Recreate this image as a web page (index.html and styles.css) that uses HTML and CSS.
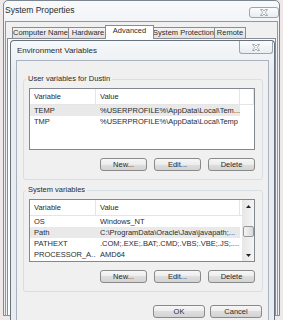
FILE: index.html
```html
<!DOCTYPE html>
<html lang="en">

<head>
  <meta charset="UTF-8">
  <meta name="viewport" content="width=device-width, initial-scale=1.0">
  <title>Environment Variables</title>
  <link rel="stylesheet" href="styles.css">
</head>

<body>
  <div class="desk">

    <!-- back window -->
    <div class="win sys">
      <div class="sys-title">
        <span class="title-text">System Properties</span>
        <span class="close sys-close">
          <svg width="8" height="7" viewBox="0 0 8 7"><polygon points="0.5,0.5 2.6,0.5 4,2 5.4,0.5 7.5,0.5 5.2,3.5 7.5,6.5 5.4,6.5 4,5 2.6,6.5 0.5,6.5 2.8,3.5" fill="#fff" stroke="#8c97a3" stroke-width="0.8"/></svg>
        </span>
      </div>
      <div class="sys-client">
        <ul class="tabs">
          <li class="t-name">Computer Name</li>
          <li class="t-hw">Hardware</li>
          <li class="t-adv on">Advanced</li>
          <li class="t-prot">System Protection</li>
          <li class="t-rem">Remote</li>
        </ul>
        <div class="tab-panel"></div>
      </div>
    </div>

    <!-- front dialog -->
    <div class="win env">
      <div class="env-title">
        <span>Environment Variables</span>
        <span class="close env-close">
          <svg width="8" height="7" viewBox="0 0 8 7"><polygon points="0.5,0.5 2.6,0.5 4,2 5.4,0.5 7.5,0.5 5.2,3.5 7.5,6.5 5.4,6.5 4,5 2.6,6.5 0.5,6.5 2.8,3.5" fill="#fff" stroke="#8c97a3" stroke-width="0.8"/></svg>
        </span>
      </div>

      <div class="env-client">
        <fieldset class="group">
          <legend>User variables for Dustin</legend>
          <div class="lv">
            <div class="lv-table">
              <div class="lv-head">
                <div class="c1">Variable</div>
                <div class="c2">Value</div>
                <div class="c3"></div>
              </div>
              <div class="lv-row sel">
                <div class="c1">TEMP</div>
                <div class="c2">%USERPROFILE%\AppData\Local\Tem...</div>
              </div>
              <div class="lv-row">
                <div class="c1">TMP</div>
                <div class="c2">%USERPROFILE%\AppData\Local\Temp</div>
              </div>
            </div>
          </div>
          <div class="btns">
            <button class="btn">New...</button>
            <button class="btn">Edit...</button>
            <button class="btn">Delete</button>
          </div>
        </fieldset>

        <fieldset class="group group-sys">
          <legend>System variables</legend>
          <div class="lv">
            <div class="lv-table">
              <div class="lv-head">
                <div class="c1">Variable</div>
                <div class="c2">Value</div>
              </div>
              <div class="lv-row">
                <div class="c1">OS</div>
                <div class="c2">Windows_NT</div>
              </div>
              <div class="lv-row sel">
                <div class="c1">Path</div>
                <div class="c2">C:\ProgramData\Oracle\Java\javapath;...</div>
              </div>
              <div class="lv-row">
                <div class="c1">PATHEXT</div>
                <div class="c2">.COM;.EXE;.BAT;.CMD;.VBS;.VBE;.JS;....</div>
              </div>
              <div class="lv-row">
                <div class="c1">PROCESSOR_A...</div>
                <div class="c2">AMD64</div>
              </div>
            </div>
            <div class="sb">
              <div class="sb-btn">
                <svg width="5" height="3" viewBox="0 0 5 3"><polygon points="2.5,0 5,3 0,3" fill="#222"/></svg>
              </div>
              <div class="sb-thumb"></div>
              <div class="sb-btn sb-down">
                <svg width="5" height="3" viewBox="0 0 5 3"><polygon points="0,0 5,0 2.5,3" fill="#222"/></svg>
              </div>
            </div>
          </div>
          <div class="btns">
            <button class="btn">New...</button>
            <button class="btn">Edit...</button>
            <button class="btn">Delete</button>
          </div>
        </fieldset>

        <div class="btns dlg-btns">
          <button class="btn">OK</button>
          <button class="btn">Cancel</button>
        </div>
      </div>
    </div>

  </div>
</body>

</html>
```

FILE: styles.css
```css
* {
  margin: 0;
  padding: 0;
  box-sizing: border-box;
  list-style: none;
}

body {
  width: 283px;
  height: 320px;
  overflow: hidden;
  background: #efe8e9;
  font-family: "Liberation Sans", Arial, sans-serif;
  font-size: 7.5px;
  color: #2b2b2b;
}

.desk {
  position: relative;
  width: 283px;
  height: 320px;
  overflow: hidden;
}

/* windows sit on the desktop, so they are placed by coordinates */
.win {
  position: absolute;
}

.close {
  display: flex;
  align-items: center;
  justify-content: center;
  border: 1px solid #9aa5b0;
  border-top: none;
  border-radius: 0 0 3px 3px;
  background: linear-gradient(#fbfcfd, #e9edf1);
}

/* ---------- System Properties (back) ---------- */
.sys {
  left: 3px;
  top: 0;
  width: 277px;
  height: 316px;
  border: 1px solid #7c8691;
  border-radius: 5px 5px 0 0;
  background: linear-gradient(#f8f9fb, #eceff3 40px);
  padding: 0 1px;
}

.sys-title {
  height: 20px;
  display: flex;
  justify-content: space-between;
  align-items: flex-start;
}

.title-text {
  font-size: 8.5px;
  line-height: 10px;
  margin-top: 4px;
}

.sys-close {
  width: 30px;
  height: 11px;
  margin: 6px -1px 0 0;
  border-top: 1px solid #9aa5b0;
  border-radius: 3px;
}

.sys-client {
  height: 295px;
  background: #f0f0f0;
  border: 1px solid #8d99a5;
  padding: 0 1px;
}

.tabs {
  display: flex;
  margin: 5px 0 0 5px;
  height: 11px;
  align-items: flex-end;
}

.tabs li {
  height: 11px;
  border: 1px solid #898c95;
  border-bottom: none;
  margin-right: -1px;
  background: linear-gradient(#f3f3f3, #e1e1e1);
  line-height: 10px;
  text-align: center;
  white-space: nowrap;
}

.tabs li.on {
  height: 14px;
  margin: 0 -2px -1px -2px;
  background: #fff;
  position: relative;
  z-index: 1;
}

.t-name {
  width: 57px;
}

.t-hw {
  width: 40px;
}

.t-adv {
  width: 49px;
}

.t-prot {
  width: 63px;
}

.t-rem {
  width: 32px;
}

.tab-panel {
  height: 278px;
  border: 1px solid #898c95;
  background: #fcfcfc;
}

/* ---------- Environment Variables (front) ---------- */
.env {
  left: 10px;
  top: 40px;
  width: 265px;
  height: 280px;
  border: 1px solid #66727e;
  border-bottom: none;
  border-radius: 4px 4px 0 0;
  background: linear-gradient(#f6f8fa, #e9edf2 30px);
  padding: 0 5px;
}

.env-title {
  position: relative;
  height: 19px;
  line-height: 19px;
  padding-left: 1px;
  font-size: 8px;
}

.env-close {
  position: absolute;
  top: 0;
  right: -4px;
  width: 34px;
  height: 13px;
}

.env-client {
  height: 260px;
  border: 1px solid #a8b3bd;
  border-bottom: none;
  background: #f0f0f0;
  padding: 0 5px 0 6px;
}

.group {
  border: 1px solid #d5dfe5;
  border-radius: 3px;
  padding: 4px 7px 8px 5px;
  margin-top: 13px;
}

.group legend {
  padding: 0 2px;
  margin-left: -3px;
  line-height: 10px;
}

.group-sys {
  margin-top: 5px;
}

/* list views */
.lv {
  display: flex;
  height: 62px;
  border: 1px solid #828790;
  background: #fff;
}

.group-sys .lv {
  height: 63px;
}

.lv-table {
  flex: 1;
}

.lv-head {
  display: flex;
  height: 16px;
  border-bottom: 1px solid #e5e5e5;
  line-height: 15px;
}

.lv-head div {
  border-right: 1px solid #e5e5e5;
}

.lv-head .c3 {
  flex: 1;
}

.lv-row {
  display: flex;
  height: 11px;
  line-height: 11px;
}

.c1,
.c2 {
  padding-left: 4px;
  white-space: nowrap;
  overflow: hidden;
}

.c1 {
  width: 66px;
}

.c2 {
  width: 144px;
}

.lv-row.sel {
  background: linear-gradient(90deg, #e9e9e9 210px, transparent 210px);
}

/* scrollbar */
.sb {
  width: 12px;
  display: flex;
  flex-direction: column;
  align-items: center;
  background: linear-gradient(90deg, #e6e6e6, #f5f5f5);
}

.sb-btn {
  width: 12px;
  height: 12px;
  display: flex;
  align-items: center;
  justify-content: center;
}

.sb-thumb {
  width: 11px;
  height: 11px;
  margin-top: 14px;
  border: 1px solid #979797;
  border-radius: 2px;
  background: linear-gradient(90deg, #f4f4f4, #dadada);
}

.sb-down {
  margin-top: auto;
}

/* buttons */
.btns {
  display: flex;
  justify-content: flex-end;
  gap: 7px;
  margin-top: 8px;
}

.btn {
  width: 47px;
  height: 13px;
  border: 1px solid #8a8a8a;
  border-radius: 3px;
  background: linear-gradient(#f7f7f7, #ececec 50%, #dedede 50%, #d3d3d3);
  font-family: inherit;
  font-size: 7.5px;
  line-height: 11px;
  color: #2a2a2a;
}

.dlg-btns {
  margin-top: 13px;
  padding-right: 1px;
  gap: 5px;
}

.dlg-btns .btn {
  width: 52px;
  height: 13px;
}
```
